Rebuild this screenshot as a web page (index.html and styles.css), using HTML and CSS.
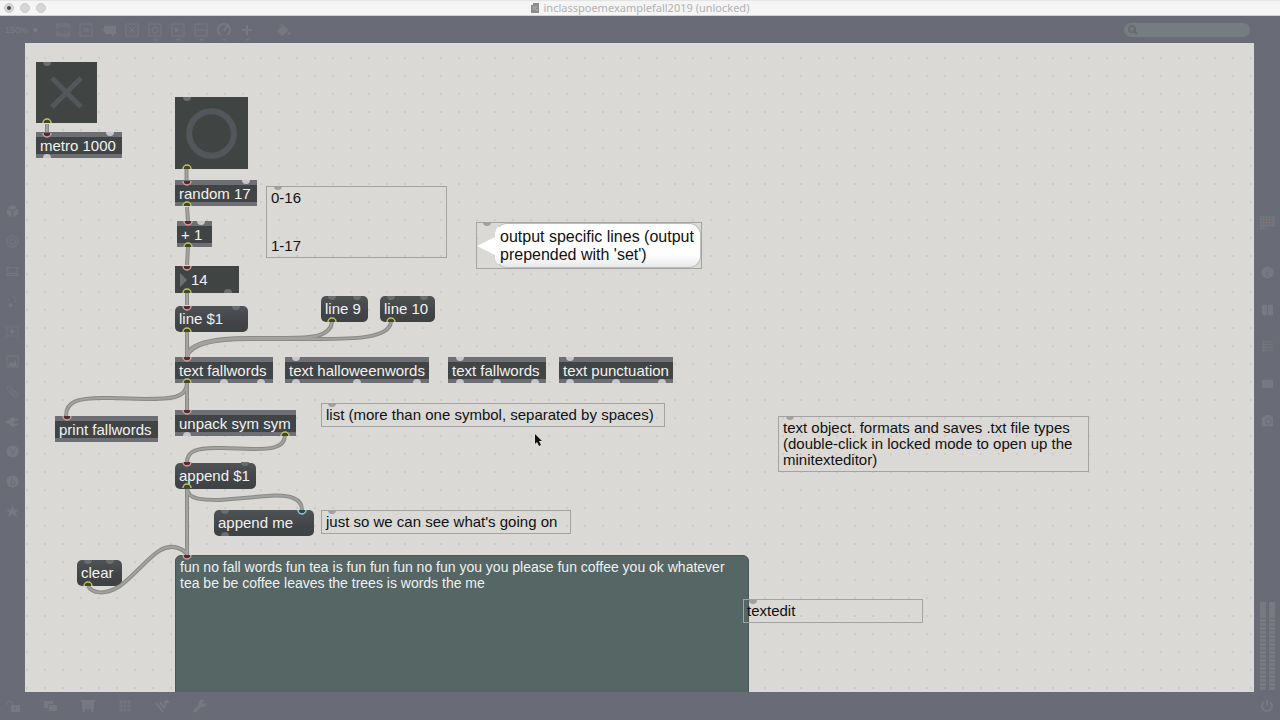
FILE: index.html
```html
<!DOCTYPE html>
<html lang="en">
<head>
<meta charset="utf-8">
<title>inclasspoemexamplefall2019 (unlocked)</title>
<link rel="stylesheet" href="styles.css">
</head>
<body>
<div class="window">
  <header class="titlebar">
    <div class="lights">
      <button class="light light-edited" aria-label="Close"></button>
      <button class="light" aria-label="Minimize"></button>
      <button class="light" aria-label="Zoom"></button>
    </div>
    <div class="title">
      <svg width="8" height="10" viewBox="0 0 8 10"><path d="M0 2h2V0h6v10H0z" fill="#8c8c8c"/><path d="M2 4h4M2 6h3M5 7h2" stroke="#bbb"/></svg>
      <span>inclasspoemexamplefall2019 (unlocked)</span>
    </div>
  </header>

  <nav class="toolbar" aria-label="Objects">
    <button class="zoom-level">150% <span class="caret">▾</span></button>
    <div class="tools">
      <button class="tool" aria-label="Object"><svg viewBox="0 0 16 20"><path d="M2 9V4h12v5M2 11v5h12v-5M2 6h12M2 14h12"/></svg></button>
      <button class="tool" aria-label="Message"><svg viewBox="0 0 16 20"><path d="M2 4h12v12H2zM5 9h6M5 11h6"/></svg></button>
      <button class="tool" aria-label="Comment"><svg viewBox="0 0 16 20"><path class="solid" d="M3 6h12v8h-2v3l-3-3H4v-2l-3-3h2z"/></svg></button>
      <button class="tool" aria-label="Toggle"><svg viewBox="0 0 16 20"><path d="M2 4h12v12H2zM5 7l6 6M11 7l-6 6"/></svg></button>
      <button class="tool" aria-label="Button"><svg viewBox="0 0 16 20"><path d="M2 4h12v12H2z"/><circle cx="8" cy="10" r="3"/><path class="solid" d="M6 19h5l-2.500 2z"/></svg></button>
      <button class="tool" aria-label="Number"><svg viewBox="0 0 16 20"><path d="M2 4h12v12H2zM11 10h2"/><path class="solid" d="M5 7l4 3-4 3zM6 19h5l-2.500 2z"/></svg></button>
      <button class="tool" aria-label="Slider"><svg viewBox="0 0 16 20"><path d="M2 4h12v12H2zM2 10h12"/><path class="solid" d="M6 19h5l-2.500 2z"/></svg></button>
      <button class="tool" aria-label="Dial"><svg viewBox="0 0 16 20"><path d="M5 15a6 6 0 1 1 6 0M8 11l3-5" stroke-width="2"/><path class="solid" d="M6 19h5l-2.500 2z"/></svg></button>
      <button class="tool" aria-label="Add"><svg viewBox="0 0 16 20"><path d="M8 5v10M3 10h10" stroke-width="2"/><path class="solid" d="M6 19h5l-2.500 2z"/></svg></button>
      <button class="tool tool-paint" aria-label="Paint"><svg viewBox="0 0 16 20"><path class="solid" d="M1 11l6-5 5 5-6 5zM13 11c2 3 2 4 0 4s-1-2 0-4z"/><path d="M4 8V5h3l5 5"/></svg></button>
    </div>
    <label class="search">
      <svg width="10" height="10" viewBox="0 0 10 10"><circle cx="4" cy="4" r="3"/><path d="M6 6l3 3"/></svg>
      <input type="search" aria-label="Search">
    </label>
  </nav>

  <div class="middle">
    <nav class="rail rail-left" aria-label="Browsers">
      <button class="rail-item" aria-label="Packages"><svg viewBox="0 0 16 16"><path class="solid" d="M8 1l5 3-5 3-5-3zM2 5l5 3v6l-5-3zM14 5L9 8v6l5-3z"/></svg></button>
      <button class="rail-item" aria-label="Audio"><svg viewBox="0 0 16 16"><circle cx="8" cy="8" r="6"/><circle cx="8" cy="8" r="3"/></svg></button>
      <button class="rail-item" aria-label="Video"><svg viewBox="0 0 16 16"><path d="M1 4h14M1 12h14M3 3v10M13 3v10M3 10h10"/></svg></button>
      <button class="rail-item" aria-label="Notes"><svg viewBox="0 0 16 16"><circle class="solid" cx="6" cy="12" r="2"/><path d="M8 3c4 0 3 3 3 6M3 6h2"/></svg></button>
      <button class="rail-item" aria-label="Clips"><svg viewBox="0 0 16 16"><path stroke-width="2" stroke-dasharray="1 2" d="M1 3h14M1 13h14M2 5v7M14 5v7"/><path class="solid" d="M6 5l5 3-5 3z"/></svg></button>
      <button class="rail-item" aria-label="Images"><svg viewBox="0 0 16 16"><path d="M2 2h12v12H2z"/><path class="solid" d="M3 13l3-5 3 2 2-4 2 7z"/></svg></button>
      <button class="rail-item" aria-label="Attachments"><svg viewBox="0 0 16 16"><path d="M11 10L6 4c-2-3-5 0-3 2l6 7c3 3 6 0 4-3L8 5M6 7l4 5"/></svg></button>
      <button class="rail-item" aria-label="Plug-ins"><svg viewBox="0 0 16 16"><path class="solid" d="M1 7h3c1-3 3-4 6-4v2h4v2h-4v3h4v2h-4v2c-3 0-5-2-6-4H1z"/></svg></button>
      <button class="rail-item" aria-label="Vizzie"><svg viewBox="0 0 16 16"><circle class="solid" cx="8" cy="8" r="6.500"/><path class="cut" d="M6 5l2 6 3-6"/></svg></button>
      <button class="rail-item" aria-label="Beap"><svg viewBox="0 0 16 16"><circle class="solid" cx="8" cy="8" r="6.500"/><path class="cut" d="M8 3L6 11h4c2-3 0-4-2-3"/></svg></button>
      <button class="rail-item" aria-label="Favorites"><svg viewBox="0 0 16 16"><path class="solid" d="M8 1l2 5h5l-4 3 2 5-5-3-5 3 2-5-4-3h5z"/></svg></button>
    </nav>

    <main class="canvas">
      <label class="node toggle"><input type="checkbox" aria-label="Toggle"><svg viewBox="0 0 61 61"><path d="M16 16l29 29M45 16L16 45"/></svg></label>
      <button class="node bang" aria-label="Bang"><svg viewBox="0 0 72 72"><circle cx="36" cy="36" r="22"/></svg></button>

      <div class="node object metro">metro 1000</div>
      <div class="node object random">random 17</div>
      <div class="node object plus">+ 1</div>
      <label class="node number"><span class="number-mark"></span><input type="text" value="14" aria-label="Number"></label>
      <button class="node message line-var">line $1</button>
      <button class="node message line-9">line 9</button>
      <button class="node message line-10">line 10</button>
      <div class="node object text-fall">text fallwords</div>
      <div class="node object text-halloween">text halloweenwords</div>
      <div class="node object text-fall-copy">text fallwords</div>
      <div class="node object text-punctuation">text punctuation</div>
      <div class="node object print">print fallwords</div>
      <div class="node object unpack">unpack sym sym</div>
      <button class="node message append-var">append $1</button>
      <button class="node message append-me">append me</button>
      <button class="node message clear">clear</button>
      <textarea class="node textedit" aria-label="Poem" spellcheck="false">fun no fall words fun tea is fun fun fun no fun you you please fun coffee you ok whatever
tea be be coffee leaves the trees is words the me</textarea>

      <div class="node comment range"><p>0-16</p><p>1-17</p></div>
      <div class="node comment list-note">list (more than one symbol, separated by spaces)</div>
      <div class="node comment see-note">just so we can see what's going on</div>
      <div class="node comment text-note">text object. formats and saves .txt file types<br>(double-click in locked mode to open up the<br>minitexteditor)</div>
      <div class="node comment edit-note">textedit</div>
      <div class="node bubble">
        <svg class="bubble-tip" viewBox="0 0 18 20"><path d="M18 1L0 10l18 9z"/></svg>
        <div class="bubble-body">output specific lines (output<br>prepended with 'set')</div>
      </div>

      <svg class="cables" aria-hidden="true">
        <defs>
          <path id="in" class="port" d="M-4 0a4 4 0 0 0 8 0z"/>
          <path id="out" class="port" d="M-4 0a4 4 0 0 1 8 0z"/>
          <path id="in-on" d="M-4 0a4 4 0 0 0 8 0"/>
          <path id="out-on" d="M-4 1a4 4 0 0 1 8 0"/>
          <g id="wires">
            <path d="M47 124V132M186.500 169V180M187 207L188 221M188 247L187 265M187 293V305M187 332V357M187 383V410"/>
            <path d="M332 322C330 338 308 338 286 338H250C207 338 187 345 187 357"/>
            <path d="M391 322C389 339 350 339 320 339H250C210 339 190 345 187 357"/>
            <path d="M187 383C187 399 168 399 146 399L110 398C76 397 66 402 66 416"/>
            <path d="M285 436C284 449 268 449 253 449L222 448C195 447 187 452 187 462"/>
            <path d="M187 489V555"/>
            <path d="M187 489C188 500 204 500 220 500L267 496C291 494 302 499 302 510"/>
            <path d="M88 586C92 593 104 596 120 586C145 567 158 541 178 548Q184 550 187 554"/>
          </g>
        </defs>
        <g transform="translate(-25 -43)">
          <use href="#wires" class="wire-edge"/>
          <use href="#wires" class="wire-core"/>
          <g fill="#c6c7ca">
            <use href="#in" x="110" y="132"/><use href="#out" x="47" y="158"/>
            <use href="#in" x="246" y="180"/><use href="#in" x="201" y="221"/>
            <use href="#out" x="224" y="383"/><use href="#out" x="261" y="383"/>
            <use href="#in" x="296" y="357"/><use href="#out" x="296" y="383"/><use href="#out" x="357" y="383"/><use href="#out" x="417" y="383"/>
            <use href="#in" x="460" y="357"/><use href="#out" x="460" y="383"/><use href="#out" x="497" y="383"/><use href="#out" x="535" y="383"/>
            <use href="#in" x="570" y="357"/><use href="#out" x="570" y="383"/><use href="#out" x="616" y="383"/><use href="#out" x="662" y="383"/>
            <use href="#out" x="187" y="436"/>
          </g>
          <g fill="#6b6e71">
            <use href="#in" x="47" y="62"/><use href="#in" x="187" y="97"/><use href="#out" x="228" y="293"/>
            <use href="#in" x="236" y="306"/><use href="#in" x="332" y="296"/><use href="#in" x="357" y="296"/>
            <use href="#in" x="391" y="296"/><use href="#in" x="424" y="296"/><use href="#in" x="245" y="462"/>
            <use href="#in" x="225" y="510"/><use href="#out" x="225" y="536"/><use href="#in" x="88" y="560"/><use href="#in" x="110" y="560"/>
          </g>
          <g fill="#a0a19f">
            <use href="#in" x="278" y="186"/><use href="#in" x="332" y="403"/><use href="#in" x="332" y="510"/>
            <use href="#in" x="790" y="416"/><use href="#in" x="753" y="600"/><use href="#in" x="487" y="222"/>
          </g>
          <g class="live-in">
            <use href="#in-on" x="47" y="133"/><use href="#in-on" x="187" y="181"/><use href="#in-on" x="188" y="221"/>
            <use href="#in-on" x="187" y="266"/><use href="#in-on" x="187" y="306"/><use href="#in-on" x="187" y="357"/>
            <use href="#in-on" x="67" y="416"/><use href="#in-on" x="187" y="410"/><use href="#in-on" x="187" y="462"/><use href="#in-on" x="187" y="555"/>
          </g>
          <g class="live-in live-second"><use href="#in-on" x="302" y="510"/></g>
          <g class="live-out">
            <use href="#out-on" x="47" y="122"/><use href="#out-on" x="187" y="168"/><use href="#out-on" x="187" y="205"/>
            <use href="#out-on" x="188" y="246"/><use href="#out-on" x="187" y="292"/><use href="#out-on" x="187" y="331"/>
            <use href="#out-on" x="332" y="321"/><use href="#out-on" x="391" y="321"/><use href="#out-on" x="187" y="382"/>
            <use href="#out-on" x="285" y="435"/><use href="#out-on" x="187" y="487"/><use href="#out-on" x="88" y="585"/>
          </g>
        </g>
      </svg>
      <svg class="pointer" viewBox="0 0 10 15"><path d="M1 1v10l2-2 2 4 2-1-2-4h3z"/></svg>
    </main>

    <nav class="rail rail-right" aria-label="Sidebar">
      <button class="rail-item" aria-label="Calendar"><svg viewBox="0 0 16 16"><path d="M0 1h16M0 4h16M0 7h16M0 10h16M0 13h5M1 0v15M4 0v15M7 0v12M10 0v12M13 0v12M15 0v12"/><path d="M5 7h4" stroke="#8b6c6c" stroke-width="2"/></svg></button>
      <button class="rail-item rail-item-gap" aria-label="Inspector"><svg viewBox="0 0 16 16"><circle class="solid" cx="8" cy="8" r="6.500"/><path class="cut" d="M9 4v1M8 7l-1 5h2"/></svg></button>
      <button class="rail-item" aria-label="Reference"><svg viewBox="0 0 16 16"><path class="solid" d="M2 3h5.500v11H2zM8.500 3H14v11H8.500z"/></svg></button>
      <button class="rail-item" aria-label="Console"><svg viewBox="0 0 16 16"><path d="M2 3h12M2 6h12M2 9h12M2 12h12M4 2v12"/></svg></button>
      <button class="rail-item" aria-label="Lessons"><svg viewBox="0 0 16 16"><path class="solid" d="M2 4h12v9H2z"/></svg></button>
      <button class="rail-item" aria-label="Snapshots"><svg viewBox="0 0 16 16"><path class="solid" d="M2 4h3l1-2h5l1 2h2v10H2z"/><circle class="cut" cx="9" cy="9" r="3"/></svg></button>
      <div class="meters"><span class="meter"></span><span class="meter"></span></div>
    </nav>
  </div>

  <footer class="statusbar">
    <button class="status-item" aria-label="Unlock"><svg viewBox="0 0 16 16"><path class="solid" d="M5 7h9v7H5z"/><path d="M1 7c0-5 5-5 6 0" /><path class="cut" d="M9 9v3"/></svg></button>
    <button class="status-item" aria-label="New view"><svg viewBox="0 0 16 16"><path class="solid" d="M1 3h9v3H5v4H1zM6 7h8v6H6z"/></svg></button>
    <button class="status-item" aria-label="Presentation"><svg viewBox="0 0 16 16"><path class="solid" d="M1 2h14v2h-1v7H2V4H1z"/><path stroke-width="2" d="M5 10l-2 4M11 10l2 4"/></svg></button>
    <button class="status-item" aria-label="Grid"><svg viewBox="0 0 16 16"><path d="M2 4h12M2 8h12M2 12h12M4 2v12M8 2v12M12 2v12"/></svg></button>
    <button class="status-item" aria-label="Mixer"><svg viewBox="0 0 16 16"><path stroke-width="2" d="M2 5l7 9M6 4l4 6M10 10l3-8M10 4h5"/></svg></button>
    <button class="status-item" aria-label="Tools"><svg viewBox="0 0 16 16"><path stroke-width="3" d="M3 14l7-7"/><path class="solid" d="M8 7c-1-4 2-6 5-5l-2 3 1 1 3-1c0 4-3 5-6 3z"/></svg></button>
    <button class="status-item status-power" aria-label="Audio on"><svg viewBox="0 0 16 16"><path stroke-width="2" d="M5 4a5 5 0 1 0 6 0M8 2v6"/></svg></button>
  </footer>
</div>
</body>
</html>
```
FILE: styles.css
```css
* { box-sizing: border-box; }

body {
  margin: 0;
  font-family: "Liberation Sans", Arial, sans-serif;
  font-size: 15px;
}

button {
  padding: 0;
  border: 0;
  background: none;
  color: inherit;
  font: inherit;
}

p { margin: 0; }

svg { display: block; fill: none; }

.window {
  display: flex;
  flex-direction: column;
  height: 100vh;
  overflow: hidden;
  background: #696c76;
}

/* Title bar */
.titlebar {
  display: grid;
  grid-template-columns: 1fr auto 1fr;
  align-items: center;
  flex: none;
  height: 16px;
  border-top: 1px solid #e4e4e4;
  border-bottom: 1px solid #d2d2d3;
  background: #f5f5f5;
}

.lights { display: flex; gap: 6px; padding-left: 4px; }

.light {
  display: grid;
  place-items: center;
  width: 10px;
  height: 10px;
  border: 1px solid #cbcbcb;
  border-radius: 50%;
  background: #d6d6d6;
}

.light-edited::after {
  content: "";
  width: 4px;
  height: 4px;
  border-radius: 50%;
  background: #4c4c4c;
}

.title {
  display: flex;
  align-items: center;
  gap: 5px;
  color: #b2b2b2;
  font: 11px/14px "Noto Sans", sans-serif;
}

/* Toolbar */
.toolbar {
  display: flex;
  align-items: center;
  flex: none;
  height: 27px;
  padding: 0 30px 0 5px;
}

.zoom-level { width: 50px; color: #7a7d83; font-size: 9px; text-align: left; }
.caret { padding-left: 2px; }

.tools { display: flex; gap: 7px; }
.tool svg { width: 16px; height: 20px; overflow: visible; }
.tool-paint { margin-left: 14px; }

.tool svg, .rail-item svg, .status-item svg { stroke: #767980; }
.solid { fill: #767980; stroke: none; }
.cut { stroke: #696c76; }

.search {
  display: flex;
  align-items: center;
  width: 126px;
  height: 14px;
  margin-left: auto;
  padding: 0 4px;
  border-radius: 7px;
  background: #777c80;
}

.search svg { flex: none; stroke: #676b71; stroke-width: 2; }

.search input {
  width: 100%;
  border: 0;
  outline: 0;
  background: none;
  font-size: 10px;
}

/* Side rails */
.middle { display: flex; flex: 1; min-height: 0; }
.rail { display: flex; flex-direction: column; flex: none; align-items: center; }
.rail-item { display: grid; place-items: center; }
.rail-item svg { width: 15px; height: 15px; }
.rail-left { width: 25px; padding-top: 153px; }
.rail-left .rail-item { height: 30px; }
.rail-right { width: 26px; padding-top: 162px; }
.rail-right .rail-item { height: 37px; }
.rail-right .rail-item-gap { margin-top: 12px; }

.meters { display: flex; gap: 3px; height: 88px; margin-top: auto; margin-bottom: 2px; }

.meter {
  width: 6px;
  background:
    linear-gradient(#777b80 0 16px, transparent 16px),
    repeating-linear-gradient(#6c6f78 0 1px, #777b80 1px 4px);
}

/* Patching canvas */
.canvas {
  position: relative;
  flex: 1;
  min-width: 0;
  overflow: hidden;
  background: #dad9d5 radial-gradient(circle at 1px 1px, #cccbc7 0 1px, transparent 1px) 1px 14px / 18px 18px;
}

.node { position: absolute; }

.toggle, .bang, .number { background: #404442; }
.toggle { left: 11px; top: 19px; width: 61px; height: 61px; }
.toggle input { position: absolute; margin: 0; opacity: 0; }
.toggle svg { stroke: #55565c; stroke-width: 5; }
.bang { left: 150px; top: 54px; width: 73px; height: 72px; }
.bang svg { stroke: #55565c; stroke-width: 6; }

.object {
  height: 26px;
  padding: 0 4px;
  border: solid #6d6f75;
  border-width: 5px 0 4px;
  background: #414444;
  color: #f2f2f2;
  line-height: 17px;
  white-space: nowrap;
}

.message {
  height: 26px;
  padding: 0 4px;
  border-radius: 5px;
  background: linear-gradient(#505356, #424548 60%, #3f4243);
  color: #f2f2f2;
  line-height: 26px;
  text-align: left;
  white-space: nowrap;
}

.metro { left: 11px; top: 89px; width: 86px; }
.random { left: 150px; top: 137px; width: 82px; }
.plus { left: 152px; top: 178px; width: 35px; }
.line-var { left: 150px; top: 263px; width: 73px; }
.line-9 { left: 296px; top: 253px; width: 47px; }
.line-10 { left: 355px; top: 253px; width: 55px; }
.text-fall { left: 150px; top: 314px; width: 98px; }
.text-halloween { left: 260px; top: 314px; width: 144px; }
.text-fall-copy { left: 423px; top: 314px; width: 98px; }
.text-punctuation { left: 534px; top: 314px; width: 114px; }
.print { left: 30px; top: 373px; width: 103px; }
.unpack { left: 150px; top: 367px; width: 121px; }
.append-var { left: 150px; top: 420px; width: 81px; }
.append-me { left: 189px; top: 467px; width: 100px; }
.clear { left: 52px; top: 517px; width: 45px; }

.number {
  left: 150px;
  top: 223px;
  display: flex;
  align-items: center;
  gap: 4px;
  width: 64px;
  height: 27px;
  padding-left: 5px;
}

.number-mark {
  border: solid transparent;
  border-width: 7px 0 7px 7px;
  border-left-color: #6d7073;
}

.number input {
  width: 40px;
  padding: 0;
  border: 0;
  outline: 0;
  background: none;
  color: #f2f2f2;
  font: inherit;
}

.textedit {
  left: 150px;
  top: 512px;
  width: 574px;
  height: 240px;
  padding: 3px 4px;
  border: 1px solid #485654;
  border-radius: 6px;
  outline: 0;
  background: #556664;
  color: #f0f0f0;
  font: 14px/16px "Liberation Sans", Arial, sans-serif;
  resize: none;
  overflow: hidden;
}

.comment {
  padding: 3px 4px;
  border: 1px solid #a3a4a1;
  color: #111;
  line-height: 16px;
  white-space: nowrap;
}

.range {
  left: 241px;
  top: 143px;
  display: flex;
  flex-direction: column;
  justify-content: space-between;
  width: 181px;
  height: 72px;
}

.list-note { left: 296px; top: 360px; width: 344px; height: 24px; }
.see-note { left: 296px; top: 467px; width: 250px; height: 24px; }
.text-note { left: 753px; top: 373px; width: 311px; height: 56px; }
.edit-note { left: 718px; top: 556px; width: 180px; height: 24px; padding-left: 3px; }

.bubble {
  left: 451px;
  top: 179px;
  display: flex;
  align-items: center;
  width: 226px;
  height: 47px;
  border: 1px solid #a3a4a1;
}

.bubble-tip { flex: none; width: 18px; height: 20px; }
.bubble-tip path { fill: #fff; }

.bubble-body {
  flex: 1;
  height: 45px;
  padding: 4px;
  border: 1px solid #bdbdbb;
  border-left-color: #fff;
  border-radius: 12px;
  background: linear-gradient(#fff 70%, #e9e9e9);
  color: #111;
  font-size: 16px;
  line-height: 18px;
  white-space: nowrap;
}

/* Patch cords and ports */
.cables {
  position: absolute;
  inset: 0;
  width: 100%;
  height: 100%;
  pointer-events: none;
}

.wire-edge { stroke: #898a86; stroke-width: 4; }
.wire-core { stroke: #a2a29e; stroke-width: 2; }
.live-in { fill: #4b3032; stroke: #dc9b9d; stroke-width: 1.5; }
.live-second { fill: #2f4648; stroke: #8fd0d4; }
.live-out { fill: #43452a; stroke: #bcc45c; stroke-width: 1.5; }

.pointer { position: absolute; left: 509px; top: 390px; width: 10px; height: 15px; }
.pointer path { fill: #111; stroke: #eee; stroke-width: 1; paint-order: stroke; }

/* Status bar */
.statusbar {
  display: flex;
  align-items: center;
  flex: none;
  gap: 21px;
  height: 28px;
  padding: 0 5px 0 6px;
}

.status-item svg { width: 16px; height: 16px; }
.status-power { margin-left: auto; }
```
